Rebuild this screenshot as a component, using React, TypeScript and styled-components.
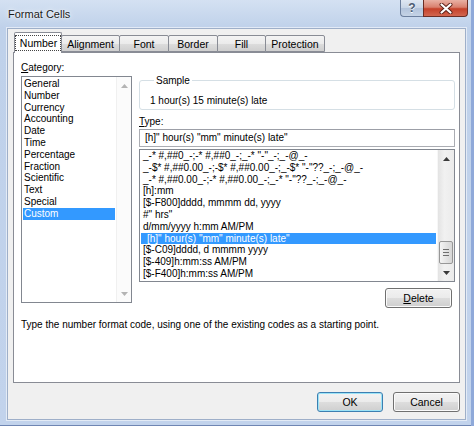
import styled, { createGlobalStyle } from 'styled-components';

const GlobalStyle = createGlobalStyle`
  html, body { margin: 0; padding: 0; background: #fff; }
  body {
    font-family: "Liberation Sans", Arial, sans-serif;
    font-size: 10px;
    color: #000;
  }
  * { box-sizing: border-box; }
`;

const Window = styled.div`
  width: 474px;
  height: 426px;
  display: flex;
  flex-direction: column;
  background: linear-gradient(to bottom, #d4e1f2 0, #bfd1ea 28px, #c2d3ec 100%);
  box-shadow: inset -3px 0 0 #8fa9d9, inset 0 -1px 0 #6f86b3;
`;

const TitleBar = styled.div`
  height: 28px;
  display: flex;
  align-items: flex-start;
  justify-content: space-between;
  padding: 0 6px 0 8px;
`;

const TitleText = styled.div`
  margin-top: 8px;
  font-size: 11px;
  color: #1a1a1a;
  text-shadow: 0 0 6px #ffffff, 0 0 2px #ffffff;
`;

const Caption = styled.div`
  display: flex;
  height: 17px;
`;

const HelpButton = styled.div`
  width: 23px;
  height: 17px;
  display: flex;
  align-items: center;
  justify-content: center;
  border: 1px solid #6c7f9e;
  border-top: none;
  border-right: none;
  border-radius: 0 0 0 4px;
  background: linear-gradient(to bottom, #dfe7f2 0%, #c8d5e6 50%, #b2c3db 51%, #c5d3e6 100%);
  font-size: 12px;
  font-weight: bold;
  color: #4b5a72;
  text-shadow: 0 1px 0 #ffffff;
`;

const CloseButton = styled.div`
  width: 45px;
  height: 17px;
  display: flex;
  align-items: center;
  justify-content: center;
  border: 1px solid #6b2d24;
  border-top: none;
  border-radius: 0 0 4px 0;
  background: linear-gradient(to bottom, #e9b1a4 0%, #d9806e 45%, #c5412a 55%, #d2664f 100%);
`;

const Client = styled.div`
  flex: 1;
  margin: 0 8px 6px 7px;
  display: flex;
  flex-direction: column;
  background: #f0f0f0;
  border: 1px solid #9eafc9;
  box-shadow: 0 0 0 1px rgba(255, 255, 255, 0.55);
  padding: 3px 5px 0 5px;
`;

const TabRow = styled.div`
  display: flex;
  align-items: flex-end;
  height: 20px;
  padding-left: 1px;
  position: relative;
  z-index: 1;
`;

const Tab = styled.div<{ $w: number; $active?: boolean }>`
  width: ${p => p.$w}px;
  height: ${p => (p.$active ? 21 : 17)}px;
  margin-bottom: ${p => (p.$active ? -1 : 0)}px;
  display: flex;
  align-items: center;
  justify-content: center;
  padding-top: ${p => (p.$active ? 0 : 1)}px;
  border: 1px solid #898c95;
  border-bottom: ${p => (p.$active ? 'none' : '1px solid #898c95')};
  border-radius: 2px 2px 0 0;
  margin-left: ${p => (p.$active ? 0 : -1)}px;
  background: ${p =>
    p.$active ? '#ffffff' : 'linear-gradient(to bottom, #f4f4f4 0%, #ebebeb 50%, #dddddd 51%, #cfcfcf 100%)'};
  color: #000;
  font-size: 10.5px;
  &:first-child { margin-left: 0; }
`;

const FocusRect = styled.span`
  border: 1px dotted #444;
  padding: 1px 3px 1px 4px;
  line-height: 12px;
`;

const Panel = styled.div`
  height: 331px;
  background: #ffffff;
  border: 1px solid #898c95;
  padding: 8px 4px 0 7px;
  display: flex;
  flex-direction: column;
`;

const PanelGrid = styled.div`
  display: grid;
  grid-template-columns: 111px 1fr;
  column-gap: 7px;
`;

const Column = styled.div`
  display: flex;
  flex-direction: column;
`;

const Label = styled.div<{ $mt?: number }>`
  line-height: 13px;
  height: 13px;
  margin-top: ${p => p.$mt ?? 0}px;
`;

const Accel = styled.span`
  text-decoration: underline;
`;

const ListBox = styled.div<{ $h: number; $mt: number }>`
  height: ${p => p.$h}px;
  margin-top: ${p => p.$mt}px;
  display: flex;
  border: 1px solid #828790;
  background: #ffffff;
  overflow: hidden;
`;

const ListItems = styled.div<{ $pt: number }>`
  flex: 1;
  display: flex;
  flex-direction: column;
  padding: ${p => p.$pt}px 1px 0 1px;
  white-space: nowrap;
  overflow: hidden;
`;

const ListItem = styled.div<{ $selected?: boolean; $pl: number }>`
  height: 11.8px;
  line-height: 11.8px;
  padding-left: ${p => p.$pl}px;
  background: ${p => (p.$selected ? '#3399ff' : 'transparent')};
  color: ${p => (p.$selected ? '#ffffff' : '#000000')};
`;

const ScrollBar = styled.div<{ $disabled?: boolean }>`
  width: ${p => (p.$disabled ? 15 : 17)}px;
  display: flex;
  flex-direction: column;
  background: ${p => (p.$disabled ? '#fbfbfb' : 'linear-gradient(to right, #e3e3e3, #f1f1f1 40%, #ebebeb)')};
  border-left: 1px solid ${p => (p.$disabled ? '#f0f0f0' : '#f7f7f7')};
`;

const ScrollArrow = styled.div`
  height: 17px;
  display: flex;
  align-items: center;
  justify-content: center;
`;

const ScrollSpace = styled.div`
  flex: 1;
`;

const ScrollThumb = styled.div`
  height: 23px;
  margin: 0 1px;
  border: 1px solid #979797;
  border-radius: 2px;
  background: linear-gradient(to right, #f4f4f4, #e4e4e4 50%, #d6d6d6);
  display: flex;
  align-items: center;
  justify-content: center;
`;

const Group = styled.fieldset`
  margin: 13px 0 0 0;
  padding: 7px 0 2px 10px;
  border: 1px solid #d5dfe5;
  border-radius: 3px;
  min-width: 0;
`;

const Legend = styled.legend`
  margin-left: 4px;
  padding: 0 2px;
  line-height: 13px;
`;

const SampleText = styled.div`
  line-height: 13px;
`;

const TypeInput = styled.div`
  height: 18px;
  margin-top: 1px;
  border: 1px solid #abadb3;
  border-top-color: #9c9fa7;
  padding-left: 5px;
  line-height: 16px;
  white-space: nowrap;
  background: #fff;
`;

const Button = styled.div<{ $w: number; $default?: boolean }>`
  width: ${p => p.$w}px;
  height: 20px;
  display: flex;
  align-items: center;
  justify-content: center;
  font-size: 10.5px;
  border: 1px solid ${p => (p.$default ? '#3c7fb1' : '#707070')};
  border-radius: 3px;
  background: linear-gradient(to bottom, #f2f2f2 0%, #ebebeb 50%, #dddddd 51%, #cfcfcf 100%);
  box-shadow: ${p => (p.$default ? 'inset 0 0 0 1px #9be3f7' : 'inset 0 0 0 1px #fbfbfb')};
`;

const DeleteRow = styled.div`
  display: flex;
  justify-content: flex-end;
  margin: 6px 3px 0 0;
`;

const Description = styled.div`
  margin-top: 10px;
  line-height: 13px;
`;

const ButtonRow = styled.div`
  display: flex;
  justify-content: flex-end;
  gap: 10px;
  margin-top: 9px;
`;

const Arrow = ({ down, color }: { down?: boolean; color: string }) => (
  <svg width="7" height="4" viewBox="0 0 7 4">
    <path d={down ? 'M0 0 H7 L3.5 4 Z' : 'M0 4 H7 L3.5 0 Z'} fill={color} />
  </svg>
);

const Grip = () => (
  <svg width="6" height="7" viewBox="0 0 6 7">
    <path d="M0 0.5 H6 M0 3.5 H6 M0 6.5 H6" stroke="#6e6e6e" strokeWidth="1" />
  </svg>
);

const categories = [
  'General', 'Number', 'Currency', 'Accounting', 'Date', 'Time',
  'Percentage', 'Fraction', 'Scientific', 'Text', 'Special', 'Custom',
];

const formats = [
  '_-* #,##0_-;-* #,##0_-;_-* "-"_-;_-@_-',
  '_-$* #,##0.00_-;-$* #,##0.00_-;_-$* "-"??_-;_-@_-',
  '_-* #,##0.00_-;-* #,##0.00_-;_-* "-"??_-;_-@_-',
  '[h]:mm',
  '[$-F800]dddd, mmmm dd, yyyy',
  '#" hrs"',
  'd/mm/yyyy h:mm AM/PM',
  '[h]" hour(s) "mm" minute(s) late"',
  '[$-C09]dddd, d mmmm yyyy',
  '[$-409]h:mm:ss AM/PM',
  '[$-F400]h:mm:ss AM/PM',
];

const tabs = [
  { label: 'Number', w: 48 },
  { label: 'Alignment', w: 59 },
  { label: 'Font', w: 50 },
  { label: 'Border', w: 50 },
  { label: 'Fill', w: 49 },
  { label: 'Protection', w: 60 },
];

export default function App() {
  return (
    <>
      <GlobalStyle />
      <Window>
        <TitleBar>
          <TitleText>Format Cells</TitleText>
          <Caption>
            <HelpButton>?</HelpButton>
            <CloseButton>
              <svg width="14" height="11" viewBox="0 0 14 11">
                <path d="M2.5 1.5 L11.5 9.5 M11.5 1.5 L2.5 9.5" stroke="#5a1f16" strokeWidth="4" strokeLinecap="round" />
                <path d="M2.5 1.5 L11.5 9.5 M11.5 1.5 L2.5 9.5" stroke="#ffffff" strokeWidth="2.2" strokeLinecap="round" />
              </svg>
            </CloseButton>
          </Caption>
        </TitleBar>
        <Client>
          <TabRow>
            {tabs.map((t, i) => (
              <Tab key={t.label} $w={t.w} $active={i === 0}>
                {i === 0 ? <FocusRect>{t.label}</FocusRect> : t.label}
              </Tab>
            ))}
          </TabRow>
          <Panel>
            <PanelGrid>
              <Column>
                <Label>
                  <Accel>C</Accel>ategory:
                </Label>
                <ListBox $h={227} $mt={2}>
                  <ListItems $pt={1}>
                    {categories.map(c => (
                      <ListItem key={c} $pl={1} $selected={c === 'Custom'}>
                        {c}
                      </ListItem>
                    ))}
                  </ListItems>
                  <ScrollBar $disabled>
                    <ScrollArrow>
                      <Arrow color="#b4b4b4" />
                    </ScrollArrow>
                    <ScrollSpace />
                    <ScrollArrow>
                      <Arrow down color="#b4b4b4" />
                    </ScrollArrow>
                  </ScrollBar>
                </ListBox>
              </Column>
              <Column>
                <Group>
                  <Legend>Sample</Legend>
                  <SampleText>1 hour(s) 15 minute(s) late</SampleText>
                </Group>
                <Label $mt={5}>
                  <Accel>T</Accel>ype:
                </Label>
                <TypeInput>[h]" hour(s) "mm" minute(s) late"</TypeInput>
                <ListBox $h={133} $mt={2}>
                  <ListItems $pt={0}>
                    {formats.map((f, i) => (
                      <ListItem key={f} $pl={i === 7 ? 6 : 2} $selected={i === 7}>
                        {f}
                      </ListItem>
                    ))}
                  </ListItems>
                  <ScrollBar>
                    <ScrollArrow>
                      <Arrow color="#3a3a3a" />
                    </ScrollArrow>
                    <ScrollSpace />
                    <ScrollThumb>
                      <Grip />
                    </ScrollThumb>
                    <ScrollArrow>
                      <Arrow down color="#3a3a3a" />
                    </ScrollArrow>
                  </ScrollBar>
                </ListBox>
                <DeleteRow>
                  <Button $w={67}>
                    <Accel>D</Accel>elete
                  </Button>
                </DeleteRow>
              </Column>
            </PanelGrid>
            <Description>
              Type the number format code, using one of the existing codes as a starting point.
            </Description>
          </Panel>
          <ButtonRow>
            <Button $w={66} $default>OK</Button>
            <Button $w={67}>Cancel</Button>
          </ButtonRow>
        </Client>
      </Window>
    </>
  );
}
